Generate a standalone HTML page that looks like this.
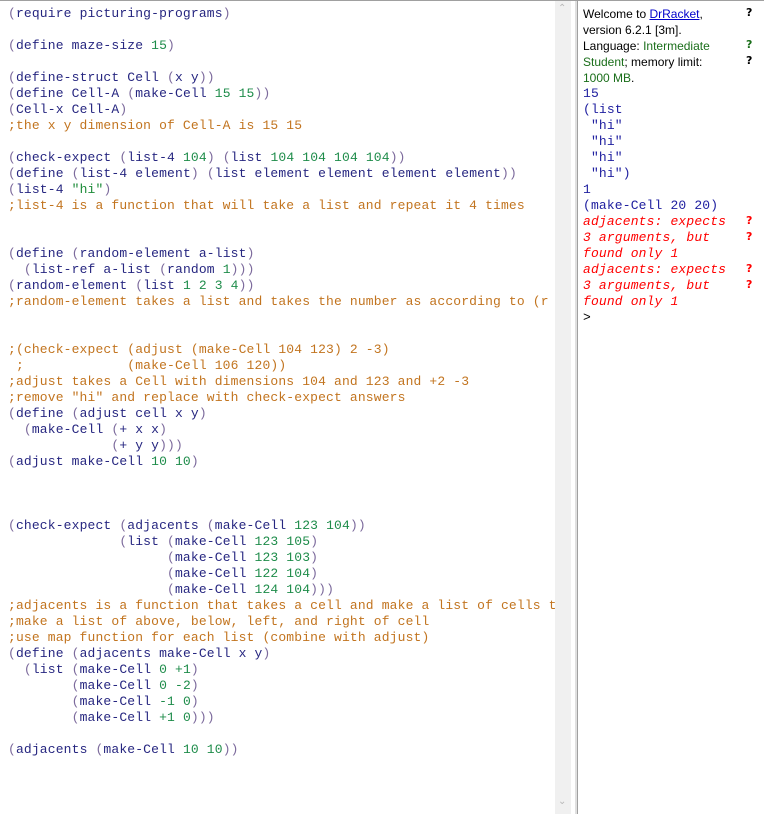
<!DOCTYPE html>
<html><head><meta charset="utf-8"><style>
body{margin:0;width:764px;height:814px;background:#fff;position:relative;overflow:hidden}
.top{position:absolute;left:0;top:0;width:764px;height:1px;background:#a0a0a0}
.ed{position:absolute;left:0;top:1px;width:555px;height:813px;background:#fff;overflow:hidden}
pre{margin:0;font-family:"Liberation Mono",monospace;font-size:13px;line-height:16px;letter-spacing:0.15px}
.ed pre{position:absolute;left:8px;top:5px}
.s{color:#262680}.p{color:#7c6a9c}.n{color:#1e8c4a}.c{color:#c2741f}.t{color:#1e8c3a}
.sb{position:absolute;left:555px;top:1px;width:16px;height:813px;background:#f0f0f0}
.sb .u,.sb .d{position:absolute;left:3px;color:#b8b8b8;font:10px "DejaVu Sans",sans-serif}
.div1{position:absolute;left:575px;top:1px;width:2px;height:813px;background:#e0e0e0}
.div2{position:absolute;left:577px;top:1px;width:1px;height:813px;background:#a0a0a0}
.ia{position:absolute;left:583px;top:6px;width:175px}
.l{height:16px;line-height:16px;white-space:pre;font-family:"Liberation Sans",sans-serif;font-size:12px;color:#000;position:relative}
.m{font-family:"Liberation Mono",monospace;font-size:13px;color:#2020a0;letter-spacing:0.15px}
.e{font-family:"Liberation Mono",monospace;font-size:13px;color:#f00;font-style:italic;letter-spacing:0.15px}
.g{color:#1a6e1a}
.ic{position:absolute;left:163px;top:2px;width:5px;height:9px;font:bold 11px "DejaVu Sans",sans-serif;line-height:10px;letter-spacing:0}
</style></head><body>
<div class="top"></div>
<div class="ed"><pre><span class="p">(</span><span class="s">require picturing-programs</span><span class="p">)</span>

<span class="p">(</span><span class="s">define maze-size </span><span class="n">15</span><span class="p">)</span>

<span class="p">(</span><span class="s">define-struct Cell </span><span class="p">(</span><span class="s">x y</span><span class="p">))</span>
<span class="p">(</span><span class="s">define Cell-A </span><span class="p">(</span><span class="s">make-Cell </span><span class="n">15 15</span><span class="p">))</span>
<span class="p">(</span><span class="s">Cell-x Cell-A</span><span class="p">)</span>
<span class="c">;the x y dimension of Cell-A is 15 15</span>

<span class="p">(</span><span class="s">check-expect </span><span class="p">(</span><span class="s">list-4 </span><span class="n">104</span><span class="p">)</span> <span class="p">(</span><span class="s">list </span><span class="n">104 104 104 104</span><span class="p">))</span>
<span class="p">(</span><span class="s">define </span><span class="p">(</span><span class="s">list-4 element</span><span class="p">)</span> <span class="p">(</span><span class="s">list element element element element</span><span class="p">))</span>
<span class="p">(</span><span class="s">list-4 </span><span class="t">"hi"</span><span class="p">)</span>
<span class="c">;list-4 is a function that will take a list and repeat it 4 times</span>


<span class="p">(</span><span class="s">define </span><span class="p">(</span><span class="s">random-element a-list</span><span class="p">)</span>
  <span class="p">(</span><span class="s">list-ref a-list </span><span class="p">(</span><span class="s">random </span><span class="n">1</span><span class="p">)))</span>
<span class="p">(</span><span class="s">random-element </span><span class="p">(</span><span class="s">list </span><span class="n">1 2 3 4</span><span class="p">))</span>
<span class="c">;random-element takes a list and takes the number as according to (r</span>


<span class="c">;(check-expect (adjust (make-Cell 104 123) 2 -3)</span>
<span class="c"> ;             (make-Cell 106 120))</span>
<span class="c">;adjust takes a Cell with dimensions 104 and 123 and +2 -3</span>
<span class="c">;remove "hi" and replace with check-expect answers</span>
<span class="p">(</span><span class="s">define </span><span class="p">(</span><span class="s">adjust cell x y</span><span class="p">)</span>
  <span class="p">(</span><span class="s">make-Cell </span><span class="p">(</span><span class="s">+ x x</span><span class="p">)</span>
             <span class="p">(</span><span class="s">+ y y</span><span class="p">)))</span>
<span class="p">(</span><span class="s">adjust make-Cell </span><span class="n">10 10</span><span class="p">)</span>



<span class="p">(</span><span class="s">check-expect </span><span class="p">(</span><span class="s">adjacents </span><span class="p">(</span><span class="s">make-Cell </span><span class="n">123 104</span><span class="p">))</span>
              <span class="p">(</span><span class="s">list </span><span class="p">(</span><span class="s">make-Cell </span><span class="n">123 105</span><span class="p">)</span>
                    <span class="p">(</span><span class="s">make-Cell </span><span class="n">123 103</span><span class="p">)</span>
                    <span class="p">(</span><span class="s">make-Cell </span><span class="n">122 104</span><span class="p">)</span>
                    <span class="p">(</span><span class="s">make-Cell </span><span class="n">124 104</span><span class="p">)))</span>
<span class="c">;adjacents is a function that takes a cell and make a list of cells t</span>
<span class="c">;make a list of above, below, left, and right of cell</span>
<span class="c">;use map function for each list (combine with adjust)</span>
<span class="p">(</span><span class="s">define </span><span class="p">(</span><span class="s">adjacents make-Cell x y</span><span class="p">)</span>
  <span class="p">(</span><span class="s">list </span><span class="p">(</span><span class="s">make-Cell </span><span class="n">0 +1</span><span class="p">)</span>
        <span class="p">(</span><span class="s">make-Cell </span><span class="n">0 -2</span><span class="p">)</span>
        <span class="p">(</span><span class="s">make-Cell </span><span class="n">-1 0</span><span class="p">)</span>
        <span class="p">(</span><span class="s">make-Cell </span><span class="n">+1 0</span><span class="p">)))</span>

<span class="p">(</span><span class="s">adjacents </span><span class="p">(</span><span class="s">make-Cell </span><span class="n">10 10</span><span class="p">))</span></pre></div>
<div class="sb"><span class="u" style="top:2px">&#8963;</span><span class="d" style="top:795px">&#8964;</span></div>
<div class="div1"></div><div class="div2"></div>
<div class="ia">
<div class="l">Welcome to <span style="color:#0000cc;text-decoration:underline">DrRacket</span>,<span class="ic">?</span></div>
<div class="l">version 6.2.1 [3m].</div>
<div class="l">Language: <span class="g">Intermediate</span><span class="ic" style="color:#1a6e1a">?</span></div>
<div class="l"><span class="g">Student</span>; memory limit:<span class="ic">?</span></div>
<div class="l"><span class="g">1000 MB</span>.</div>
<div class="l m">15</div>
<div class="l m">(list</div>
<div class="l m"> "hi"</div>
<div class="l m"> "hi"</div>
<div class="l m"> "hi"</div>
<div class="l m"> "hi")</div>
<div class="l m">1</div>
<div class="l m">(make-Cell 20 20)</div>
<div class="l e">adjacents: expects<span class="ic" style="color:#f00;font-style:normal">?</span></div>
<div class="l e">3 arguments, but<span class="ic" style="color:#f00;font-style:normal">?</span></div>
<div class="l e">found only 1</div>
<div class="l e">adjacents: expects<span class="ic" style="color:#f00;font-style:normal">?</span></div>
<div class="l e">3 arguments, but<span class="ic" style="color:#f00;font-style:normal">?</span></div>
<div class="l e">found only 1</div>
<div class="l m" style="color:#000">&gt;</div>
</div>
</body></html>
